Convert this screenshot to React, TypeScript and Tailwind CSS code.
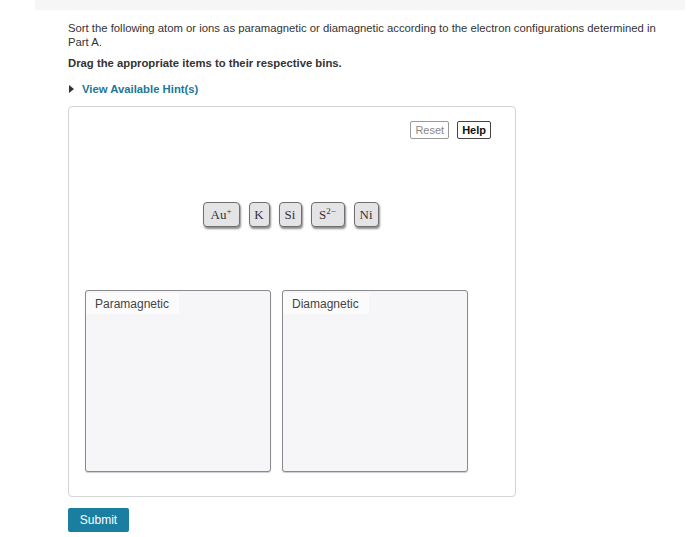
import type { ReactNode } from "react";

const Tile = ({ children, w }: { children: ReactNode; w: string }) => (
  <div
    className={`${w} h-[25px] flex items-center justify-center rounded-[4px] border border-[#6f6f6f] bg-[#e4e4e6] text-[13px] text-[#333] shadow-[1px_2px_2px_rgba(0,0,0,0.45)]`}
    style={{ fontFamily: '"Liberation Serif", "DejaVu Serif", serif' }}
  >
    {children}
  </div>
);

const Bin = ({ label }: { label: string }) => (
  <div className="w-[186px] h-[182px] rounded-[3px] border border-[#8a8a8e] bg-[#f6f6f8] shadow-[0_1px_1px_rgba(0,0,0,0.2)]">
    <div className="inline-block bg-[#fbfbfc] pl-[9px] pr-[10px] pt-[2px] pb-[1px] text-[12px] text-[#444]">
      {label}
    </div>
  </div>
);

const App = () => {
  return (
    <div
      className="w-[700px] h-[537px] bg-white text-[#222]"
      style={{ fontFamily: '"Liberation Sans", Arial, sans-serif' }}
    >
      <div className="ml-[35px] w-[650px] h-[10px] bg-[#f6f6f6]" />
      <div className="pl-[68px] pr-[30px] pt-[11px]">
        <p className="text-[11.3px] leading-[14px] text-[#333]">
          Sort the following atom or ions as paramagnetic or diamagnetic according to the electron configurations determined in
          Part A.
        </p>
        <p className="mt-[7px] text-[11.3px] leading-[14px] font-bold text-[#333]">
          Drag the appropriate items to their respective bins.
        </p>
        <div className="mt-[12px] flex items-center gap-[8px] text-[11.3px] leading-[14px] font-bold text-[#1d7796]">
          <span className="ml-[1px] inline-block w-0 h-0 border-y-[4px] border-y-transparent border-l-[5px] border-l-[#333]" />
          <span>View Available Hint(s)</span>
        </div>

        <div className="mt-[10px] w-[448px] h-[391px] rounded-[4px] border border-[#d4d4d4] flex flex-col">
          <div className="flex justify-end gap-[8px] pt-[14px] pr-[24px]">
            <div className="h-[18px] px-[4px] flex items-center rounded-[2px] border border-[#9a9a9a] text-[11px] text-[#888]">
              Reset
            </div>
            <div className="h-[18px] px-[4px] flex items-center rounded-[2px] border border-[#444] text-[11px] font-bold text-[#111]">
              Help
            </div>
          </div>
          <div className="mt-[63px] flex justify-center gap-[9px] pr-[3px]">
            <Tile w="w-[37px]">
              <span>
                Au<sup className="text-[9px]">+</sup>
              </span>
            </Tile>
            <Tile w="w-[21px]">K</Tile>
            <Tile w="w-[23px]">Si</Tile>
            <Tile w="w-[34px]">
              <span>
                S<sup className="text-[9px]">2−</sup>
              </span>
            </Tile>
            <Tile w="w-[25px]">Ni</Tile>
          </div>
          <div className="mt-[63px] flex gap-[11px] pl-[16px]">
            <Bin label="Paramagnetic" />
            <Bin label="Diamagnetic" />
          </div>
        </div>

        <button className="mt-[11px] w-[61px] h-[24px] rounded-[2px] bg-[#1a7ea1] text-[12px] text-white">
          Submit
        </button>
      </div>
    </div>
  );
};

export default App;
